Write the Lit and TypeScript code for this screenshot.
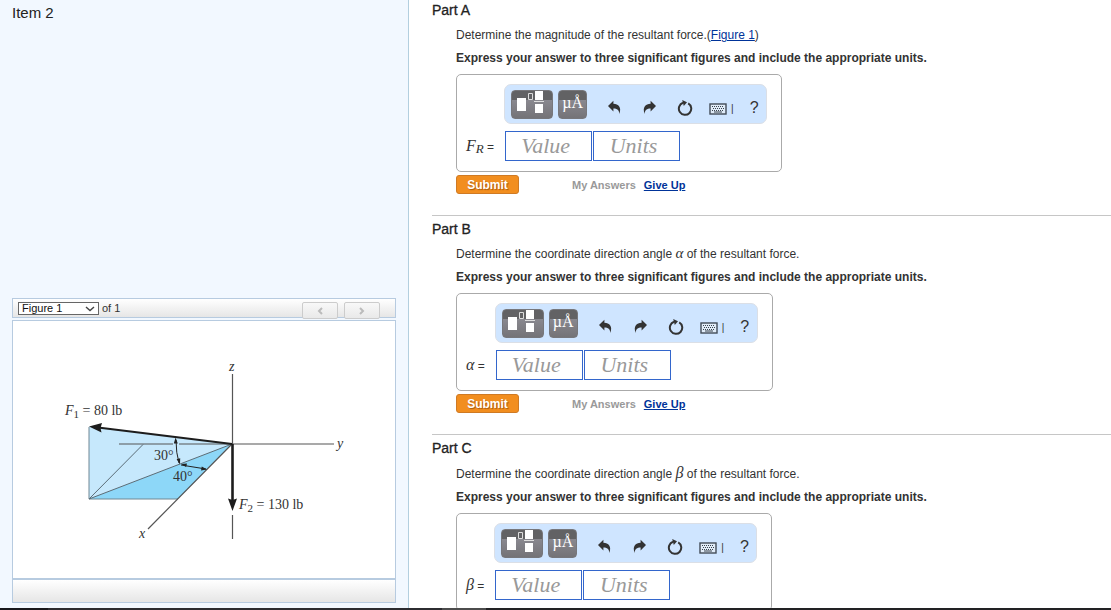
import { LitElement, html, svg, css, TemplateResult } from "lit";
import { customElement, property } from "lit/decorators.js";

interface Part {
  id: string;
  prompt: TemplateResult;
  symbol: TemplateResult;
}

const PARTS: Part[] = [
  {
    id: "A",
    prompt: html`Determine the magnitude of the resultant force.(<a href="#figure">Figure 1</a>)`,
    symbol: html`<i>F<sub>R</sub></i>`,
  },
  {
    id: "B",
    prompt: html`Determine the coordinate direction angle <i class="small">α</i> of the resultant force.`,
    symbol: html`<i>α</i>`,
  },
  {
    id: "C",
    prompt: html`Determine the coordinate direction angle <i>β</i> of the resultant force.`,
    symbol: html`<i>β</i>`,
  },
];

const curvedArrow = svg`<path d="M1 6 L6.4 .8 V3.7 C11.400 4 15 7.200 12.200 14 C12.400 10.200 10 8.600 6.400 8.600 V11.400 Z" fill="#333"/>`;

@customElement("answer-toolbar")
export class AnswerToolbar extends LitElement {
  static styles = css`
    :host {
      display: flex;
      align-items: flex-start;
      box-sizing: border-box;
      width: 263px;
      height: 40px;
      padding: 5px 6px;
      border: 1px solid #dbdfe6;
      border-radius: 7px;
      background: #cfe5ff;
    }
    button {
      display: grid;
      place-items: center;
      margin: 0;
      padding: 0;
      border: 0;
      background: none;
      color: #333;
    }
    .dark {
      height: 29px;
      border: 1px solid #77777b;
      border-radius: 4px;
      background: linear-gradient(#626264 0 9px, #89888f 9px, #747377);
      color: #fff;
    }
    .templates {
      width: 42px;
      margin-right: 5px;
    }
    .units {
      width: 29px;
      font: 16px/24px "Liberation Serif", serif;
      align-content: start;
    }
    .tools {
      display: flex;
      align-items: center;
      gap: 19px;
      height: 36px;
      margin-left: 20px;
    }
    .keyboard {
      display: flex;
      align-items: center;
      gap: 4px;
      margin-left: -3px;
      font: 10px "Liberation Sans", sans-serif;
    }
    .help {
      margin-left: -3px;
      font: 16px/20px "Liberation Sans", sans-serif;
    }
    svg {
      display: block;
    }
  `;

  render() {
    return html`
      <button class="dark templates" aria-label="Templates">
        <svg width="40" height="27" viewBox="0 0 40 27">
          <path d="M5 7h9v13h-9zM23 0h8v9h-8zM23 13h8v9h-8z" fill="#fff" />
          <path d="M16.500 2.500h4v6h-4z" fill="none" stroke="#ddd" />
          <path d="M22 10.500h10" stroke="#ddd" />
        </svg>
      </button>
      <button class="dark units" aria-label="Units">µÅ</button>
      <div class="tools">
        <button aria-label="Undo"><svg width="16" height="16" viewBox="0 0 16 16">${curvedArrow}</svg></button>
        <button aria-label="Redo">
          <svg width="16" height="16" viewBox="0 0 16 16"><g transform="matrix(-1 0 0 1 15 0)">${curvedArrow}</g></svg>
        </button>
        <button aria-label="Reset">
          <svg width="16" height="16" viewBox="0 0 16 16">
            <path d="M11.200 3.300A6.200 6.200 0 1 1 6 2.800" fill="none" stroke="#333" stroke-width="2" />
            <path d="M5.200 0L10 2.200L6.800 6Z" fill="#333" />
          </svg>
        </button>
        <button class="keyboard" aria-label="Keyboard">
          <svg width="18" height="16" viewBox="0 0 18 16">
            <rect x="1" y="4" width="16" height="10" fill="#e1ecf8" stroke="#424c57" stroke-width="1.400" />
            <path d="M3 6.500h12M4 8.500h11M3 10.500h12" stroke="#39434d" stroke-dasharray="1 1" />
            <path d="M5 12h8" stroke="#39434d" />
          </svg>
          <span>|</span>
        </button>
        <button class="help" aria-label="Help">?</button>
      </div>
    `;
  }
}

@customElement("question-part")
export class QuestionPart extends LitElement {
  @property({ attribute: false }) part!: Part;

  static styles = css`
    :host {
      display: block;
      padding: 4px 0 21px;
      border-top: 1px solid #c6c6c6;
      color: #333;
      font: 12px/16px "Liberation Sans", Arial, sans-serif;
    }
    :host(:first-child) {
      padding-top: 1px;
      border-top: 0;
    }
    h2 {
      margin: 0;
      color: #222;
      font-size: 14px;
      font-weight: 400;
      line-height: 18px;
      -webkit-text-stroke: 0.3px #222;
    }
    .body {
      margin-left: 24px;
    }
    p {
      margin: 8px 0 0;
    }
    a {
      color: #003399;
    }
    i {
      font-family: "Liberation Serif", serif;
      font-size: 16px;
      line-height: 16px;
    }
    .small {
      font-size: 15px;
      line-height: 1;
    }
    sub {
      font-size: 13px;
      line-height: 1;
      vertical-align: -2px;
    }
    .hint {
      margin-top: 7px;
      font-weight: 700;
    }
    .answer {
      display: inline-grid;
      grid-template-columns: auto auto;
      gap: 7px 10px;
      align-items: center;
      box-sizing: border-box;
      margin-top: 8px;
      padding: 9px 14px 10px 9px;
      border: 1px solid #aaa;
      border-radius: 5px;
      vertical-align: top;
    }
    answer-toolbar {
      grid-column: 2;
    }
    .fields {
      display: flex;
      gap: 1px;
      margin-left: 1px;
    }
    input {
      box-sizing: border-box;
      width: 87px;
      height: 30px;
      margin: 0;
      padding: 0 6px 0 0;
      border: 1px solid #3366cc;
      border-radius: 0;
      background: #fff;
      font: italic 22px/28px "Liberation Serif", serif;
      text-align: center;
    }
    input::placeholder {
      color: #999;
      opacity: 1;
    }
    .actions {
      display: flex;
      align-items: center;
      margin-top: 3px;
      font-size: 11px;
      font-weight: 700;
      color: #999;
    }
    .submit {
      width: 63px;
      height: 19px;
      margin-right: 53px;
      padding: 0;
      border: 1px solid #cf7a24;
      border-radius: 3px;
      background: #f28e1f;
      color: #fff;
      font: 700 12px/16px "Liberation Sans", Arial, sans-serif;
      text-shadow: 1px 1px 1px #a55a10;
    }
    .actions a {
      margin-left: 8px;
    }
  `;

  render() {
    const { id, prompt, symbol } = this.part;
    return html`
      <h2>Part ${id}</h2>
      <div class="body">
        <p>${prompt}</p>
        <p class="hint">Express your answer to three significant figures and include the appropriate units.</p>
        <div class="answer">
          <answer-toolbar></answer-toolbar>
          <label for="value">${symbol} =</label>
          <div class="fields">
            <input id="value" placeholder="Value" />
            <input placeholder="Units" aria-label="Units" />
          </div>
        </div>
        <div class="actions">
          <button class="submit">Submit</button>
          <span>My Answers</span>
          <a href="#give-up">Give Up</a>
        </div>
      </div>
    `;
  }
}

@customElement("force-figure")
export class ForceFigure extends LitElement {
  static styles = css`
    :host {
      display: block;
      color: #333;
      font: 12px/16px "Liberation Sans", Arial, sans-serif;
    }
    .bar {
      box-sizing: border-box;
      border: 1px solid #b7cbe0;
      background: linear-gradient(#fff, #e6e6e6);
    }
    .head {
      display: flex;
      align-items: flex-start;
      height: 20px;
      margin-bottom: 2px;
      padding: 3px 15px 0 5px;
    }
    .picker {
      display: grid;
      align-items: center;
      margin-right: 3px;
    }
    .picker > * {
      grid-area: 1 / 1;
    }
    select {
      appearance: none;
      box-sizing: border-box;
      width: 81px;
      height: 13px;
      margin: 0;
      padding: 0 0 0 3px;
      border: 1px solid #666;
      border-radius: 0;
      background: #fff;
      color: #111;
      font: 11px/11px "Liberation Sans", Arial, sans-serif;
    }
    .caret {
      justify-self: end;
      margin-right: 4px;
      pointer-events: none;
    }
    .count {
      font-size: 11px;
      line-height: 13px;
    }
    nav {
      display: flex;
      gap: 6px;
      margin-left: auto;
    }
    nav button {
      display: grid;
      place-items: center;
      width: 36px;
      height: 17px;
      padding: 0;
      border: 1px solid #ccc;
      border-radius: 2px;
      background: linear-gradient(#f8f8f8, #e9e9e9);
    }
    .canvas {
      border: 1px solid #b7cbe0;
      background: #fff;
    }
    .canvas svg {
      display: block;
      width: 100%;
      height: 257px;
    }
    .foot {
      height: 24px;
    }
    .label {
      fill: #333;
      font: 14px "Liberation Serif", serif;
    }
    .sub {
      font-size: 11px;
    }
    .it {
      font-style: italic;
    }
  `;

  render() {
    return html`
      <div class="bar head">
        <div class="picker">
          <select aria-label="Figure">
            <option>Figure 1</option>
          </select>
          <svg class="caret" width="10" height="6" viewBox="0 0 10 6">
            <path d="M1 1L5 4.600L9 1" fill="none" stroke="#444" stroke-width="1.400" />
          </svg>
        </div>
        <span class="count">of 1</span>
        <nav>
          <button aria-label="Previous figure">
            <svg width="6" height="8" viewBox="0 0 6 8"><path d="M5 1L2 4L5 7" fill="none" stroke="#bbb" stroke-width="2" /></svg>
          </button>
          <button aria-label="Next figure">
            <svg width="6" height="8" viewBox="0 0 6 8"><path d="M1 1L4 4L1 7" fill="none" stroke="#bbb" stroke-width="2" /></svg>
          </button>
        </nav>
      </div>
      <div class="canvas" id="figure">
        <svg viewBox="13 321 382 257" role="img" aria-label="Two forces acting at the origin">
          <path d="M89 426.500L232 444L89 499Z" fill="#c6e8fc" />
          <path d="M89 499L232 444L178 499Z" fill="#8dd7f8" />
          <g fill="none" stroke="#6f8794">
            <path d="M89 427V499H178" />
            <path d="M89 499L232 444M89 499L143 444.500" stroke="#5b6c76" />
          </g>
          <g fill="none" stroke="#555" stroke-width="1.200">
            <path d="M119 444H173M179 444H334M232.500 374V444M232.500 515V539M232 444L148 529" />
          </g>
          <path d="M176 440Q176 453 179 463M181 465L206 469" fill="none" stroke="#222" />
          <path d="M175.600 437.500l2.200 6h-4zM180 464.500l-3.400-5.200 3.600-1zM181 464l6-.6-.9 3.600zM207 469.600l-6 .8.8-3.800z" fill="#222" />
          <path d="M232 444L98 427.500" stroke="#1d1d1d" stroke-width="2.200" />
          <path d="M89 426.500L102 423L100.500 428L101.500 432.500Z" fill="#1d1d1d" />
          <path d="M232.500 444V502" stroke="#1d1d1d" stroke-width="2.600" />
          <path d="M232.500 511L228 498.500L232.500 500L237 498.500Z" fill="#1d1d1d" />
          <text class="label it" x="229" y="371">z</text>
          <text class="label it" x="337" y="448">y</text>
          <text class="label it" x="139" y="538">x</text>
          <text class="label" x="65" y="415"><tspan class="it">F</tspan><tspan class="sub" dy="3">1</tspan><tspan dy="-3"> = 80 lb</tspan></text>
          <text class="label" x="239" y="509"><tspan class="it">F</tspan><tspan class="sub" dy="3">2</tspan><tspan dy="-3"> = 130 lb</tspan></text>
          <text class="label" x="154" y="460">30°</text>
          <text class="label" x="173" y="481">40°</text>
        </svg>
      </div>
      <div class="bar foot"></div>
    `;
  }
}

@customElement("app-root")
export class AppRoot extends LitElement {
  static styles = css`
    :host {
      display: flex;
      flex-direction: column;
      height: 100vh;
      overflow: hidden;
      background: #fff;
      font-family: "Liberation Sans", Arial, sans-serif;
    }
    .columns {
      display: flex;
      flex: 1;
      min-height: 0;
    }
    aside {
      display: flex;
      flex: 0 0 409px;
      flex-direction: column;
      justify-content: space-between;
      box-sizing: border-box;
      padding: 4px 12px 5px;
      border-right: 1px solid #b3cfdf;
      background: #f2f8ff;
    }
    h1 {
      margin: 0;
      color: #222;
      font-size: 15px;
      font-weight: 400;
      line-height: 18px;
    }
    main {
      flex: 1;
      min-width: 0;
      padding-left: 23px;
      overflow-y: auto;
      scrollbar-width: none;
    }
    .edge {
      flex: 0 0 2px;
      background: linear-gradient(90deg, #18181c 0 48px, #2c2c30 48px 442px, #4c4c4c 442px 486px, #222224 486px);
    }
  `;

  render() {
    return html`
      <div class="columns">
        <aside>
          <h1>Item 2</h1>
          <force-figure></force-figure>
        </aside>
        <main>${PARTS.map((part) => html`<question-part .part=${part}></question-part>`)}</main>
      </div>
      <div class="edge"></div>
    `;
  }
}
